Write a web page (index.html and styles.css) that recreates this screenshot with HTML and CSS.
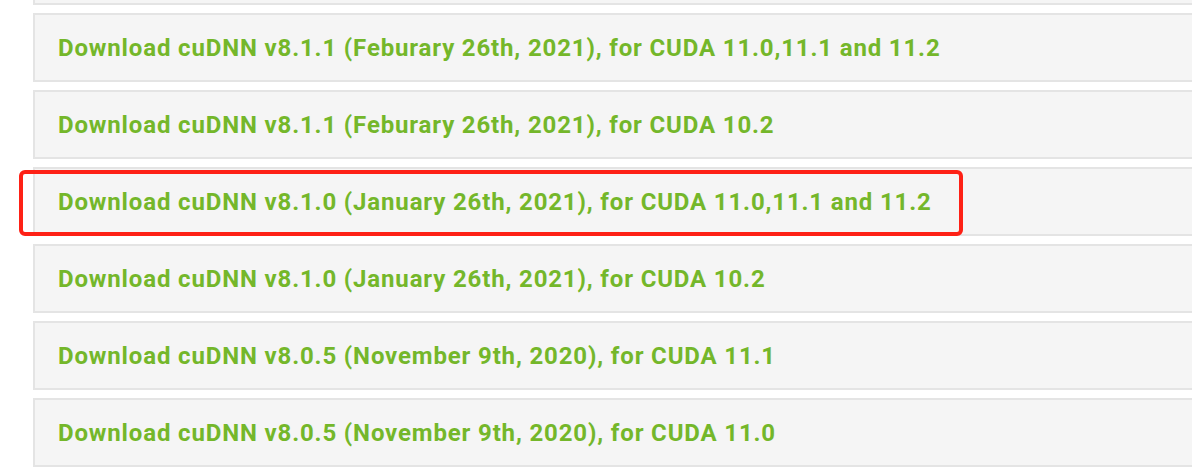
FILE: index.html
```html
<!DOCTYPE html>
<html>
<head>
<meta charset="utf-8">
<link rel="stylesheet" href="styles.css">
</head>
<body>
<div class="list">
  <div class="panel panel-cut"></div>
  <div class="panel"><a class="dl" href="#">Download cuDNN v8.1.1 (Feburary 26th, 2021), for CUDA 11.0,11.1 and 11.2</a></div>
  <div class="panel"><a class="dl" href="#">Download cuDNN v8.1.1 (Feburary 26th, 2021), for CUDA 10.2</a></div>
  <div class="panel highlighted"><a class="dl" href="#">Download cuDNN v8.1.0 (January 26th, 2021), for CUDA 11.0,11.1 and 11.2</a><span class="mark"></span></div>
  <div class="panel"><a class="dl" href="#">Download cuDNN v8.1.0 (January 26th, 2021), for CUDA 10.2</a></div>
  <div class="panel"><a class="dl" href="#">Download cuDNN v8.0.5 (November 9th, 2020), for CUDA 11.1</a></div>
  <div class="panel"><a class="dl" href="#">Download cuDNN v8.0.5 (November 9th, 2020), for CUDA 11.0</a></div>
</div>
</body>
</html>
```
FILE: styles.css
```css
html, body {
  margin: 0;
  padding: 0;
  background: #ffffff;
  overflow: hidden;
}
.list {
  display: flex;
  flex-direction: column;
  gap: 8px;
  margin-top: -64px;
  margin-left: 33px;
  width: 1200px;
}
.panel {
  position: relative;
  box-sizing: border-box;
  height: 69px;
  background: #f5f5f5;
  border: 2px solid #e4e4e4;
  display: flex;
  align-items: center;
  padding-left: 23px;
}
.dl {
  font-family: Roboto, "Liberation Sans", sans-serif;
  font-weight: 700;
  font-size: 24px;
  letter-spacing: 0.85px;
  color: #74b72a;
  text-decoration: none;
  white-space: nowrap;
}
.mark {
  position: absolute;
  left: -16px;
  top: 1px;
  width: 944px;
  height: 66px;
  box-sizing: border-box;
  border: 4px solid #fe2116;
  border-radius: 6px;
}
```
